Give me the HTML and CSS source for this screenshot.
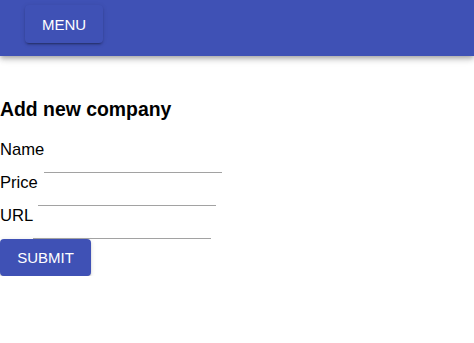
FILE: index.html
```html
<!DOCTYPE html>
<html>
<head>
<meta charset="utf-8">
<link rel="stylesheet" href="styles.css">
</head>
<body>
<header class="appbar">
  <button class="btn btn-menu">MENU</button>
</header>
<main class="content">
  <h3 class="title">Add new company</h3>
  <form class="form">
    <div class="row"><label class="label">Name</label><div class="input"></div></div>
    <div class="row"><label class="label">Price</label><div class="input"></div></div>
    <div class="row"><label class="label">URL</label><div class="input"></div></div>
    <button class="btn btn-submit" type="button">SUBMIT</button>
  </form>
</main>
</body>
</html>
```

FILE: styles.css
```css
html, body {
  margin: 0;
  padding: 0;
  background: #fff;
  font-family: "Liberation Sans", Arial, sans-serif;
  color: #000;
}

.appbar {
  height: 56px;
  box-sizing: border-box;
  padding: 5px 25px;
  background: #3f51b5;
  display: flex;
  align-items: flex-start;
  box-shadow: 0px 2px 4px -1px rgba(0,0,0,0.2), 0px 4px 5px 0px rgba(0,0,0,0.14), 0px 1px 10px 0px rgba(0,0,0,0.12);
  position: relative;
}

.btn {
  font-family: "Liberation Sans", Arial, sans-serif;
  font-size: 15px;
  color: #fff;
  background: #3f51b5;
  border: 0;
  border-radius: 4px;
  display: flex;
  align-items: center;
  justify-content: center;
  padding: 0;
  box-shadow: 0px 3px 1px -2px rgba(0,0,0,0.2), 0px 2px 2px 0px rgba(0,0,0,0.14), 0px 1px 5px 0px rgba(0,0,0,0.12);
}

.btn-menu {
  width: 78px;
  height: 38px;
}

.btn-submit {
  width: 91px;
  height: 37px;
}

.content {
  padding: 0;
}

.title {
  margin: 42px 0 20px;
  font-size: 19.4px;
  line-height: 22px;
  font-weight: bold;
}

.form {
  margin: 0;
}

.row {
  display: flex;
  align-items: flex-start;
  height: 33px;
}

.label {
  font-size: 16.6px;
  line-height: 20px;
}

.input {
  width: 178px;
  height: 32px;
  border-bottom: 1px solid #a2a2a2;
}
```
